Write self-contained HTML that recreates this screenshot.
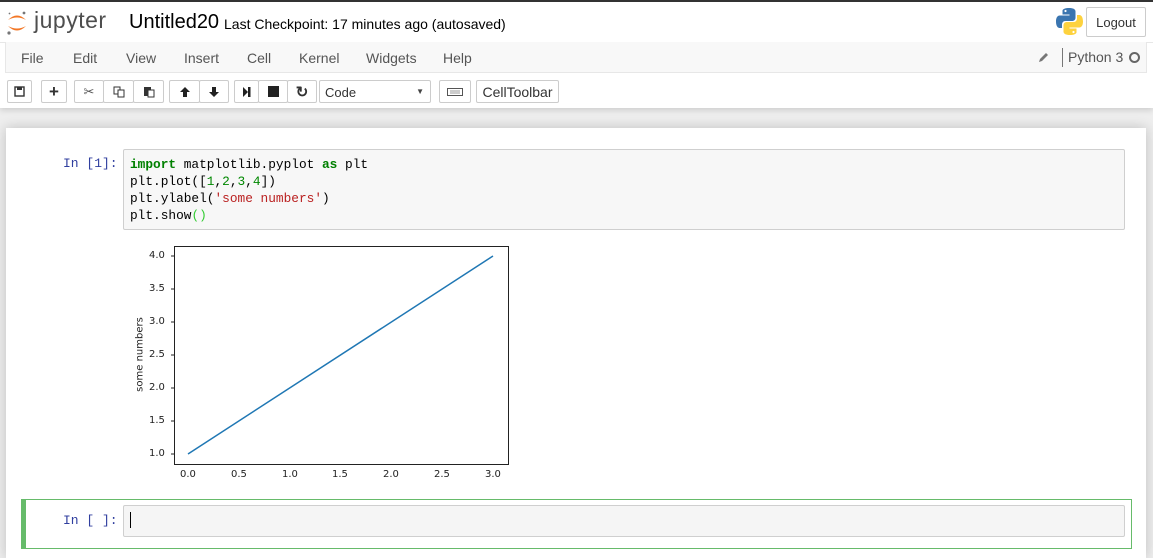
<!DOCTYPE html>
<html><head><meta charset="utf-8"><style>
*{box-sizing:border-box}
body{margin:0;width:1153px;height:555px;overflow:hidden;background:#eee;font-family:"Liberation Sans",Arial,sans-serif;position:relative}
.a{position:absolute}
.btn{position:absolute;top:80px;height:23px;border:1px solid #ccc;background:#fff;border-radius:2px;display:flex;align-items:center;justify-content:center;font-size:13px;color:#333}
.menu span{position:absolute;top:50px;font-size:14px;color:#555}
.code{font-family:"Liberation Mono","DejaVu Sans Mono",monospace;font-size:12.8px;line-height:17px;white-space:pre}
.prompt{font-family:"Liberation Mono","DejaVu Sans Mono",monospace;font-size:13px;color:#303f9f}
.tick{position:absolute;font-size:10px;color:#222;font-family:"DejaVu Sans",sans-serif}
</style></head><body>
<div class="a" style="left:0;top:0;width:1153px;height:108px;background:#fff;box-shadow:0 2px 6px rgba(0,0,0,.15)"></div>
<div class="a" style="left:0;top:0;width:1153px;height:2px;background:#333"></div>
<!-- logo -->
<svg class="a" style="left:5px;top:8px" width="24" height="28" viewBox="0 0 24 28">
<path d="M3 12 Q12 3 21 12 Q12 7 3 12Z" fill="#f37726"/>
<path d="M3 18 Q12 27 21 18 Q12 23 3 18Z" fill="#f37726"/>
<circle cx="19" cy="5" r="1.4" fill="#767677"/><circle cx="4" cy="25" r="1.6" fill="#767677"/><circle cx="4.5" cy="5.5" r="0.9" fill="#767677"/>
</svg>
<div class="a" style="left:34px;top:7px;font-size:23px;color:#4e4e4e;letter-spacing:0.5px">jupyter</div>
<div class="a" style="left:129px;top:11px;font-size:20px;color:#000">Untitled20</div>
<div class="a" style="left:224px;top:16px;font-size:14px;color:#000">Last Checkpoint: 17 minutes ago (autosaved)</div>
<!-- python logo -->
<svg class="a" style="left:1055px;top:7px" width="29" height="29" viewBox="0 0 29 29">
<path d="M14 1C7 1 7.5 4 7.5 4v3.5h7v1H5S1 8 1 14.5 4.5 21 4.5 21H7v-3.5s0-3.5 3.5-3.5h6.5s3.5 0 3.5-3.3V4.5S21 1 14 1z" fill="#3a75b0"/>
<circle cx="10.5" cy="4" r="1.1" fill="#fff"/>
<path d="M15 28c7 0 6.5-3 6.5-3v-3.5h-7v-1H24s4 .5 4-6S24.5 8 24.5 8H22v3.5s0 3.5-3.5 3.5H12s-3.5 0-3.5 3.3v6.2S8 28 15 28z" fill="#fdd23e"/>
<circle cx="18.5" cy="25" r="1.1" fill="#fff"/>
</svg>
<div class="a" style="left:1086px;top:7px;width:60px;height:30px;border:1px solid #ccc;border-radius:2px;font-size:13px;color:#333;display:flex;align-items:center;justify-content:center">Logout</div>
<div class="a" style="left:0;top:42px;width:1153px;height:1px;background:#e7e7e7"></div>
<!-- menubar -->
<div class="a" style="left:5px;top:42px;width:1142px;height:31px;background:#f8f8f8;border:1px solid #e7e7e7;border-top:none"></div>
<div class="menu"><span style="left:21px">File</span><span style="left:73px">Edit</span><span style="left:126px">View</span><span style="left:184px">Insert</span><span style="left:247px">Cell</span><span style="left:299px">Kernel</span><span style="left:366px">Widgets</span><span style="left:443px">Help</span></div>
<svg class="a" style="left:1038px;top:51px" width="12" height="12" viewBox="0 0 12 12"><path d="M1 11l1-3 6-6 2 2-6 6z" fill="#777"/></svg>
<div class="a" style="left:1062px;top:48px;width:1px;height:19px;background:#777"></div>
<div class="a" style="left:1068px;top:49px;font-size:14px;color:#555">Python 3</div>
<div class="a" style="left:1129px;top:52px;width:11px;height:11px;border:2px solid #666;border-radius:50%"></div>
<!-- toolbar -->
<div class="btn" style="left:7px;width:25px"><svg width="11" height="11" viewBox="0 0 11 11"><rect x="1" y="1" width="9" height="9" fill="none" stroke="#333" stroke-width="1.4"/><rect x="3" y="1" width="5" height="3" fill="#333"/></svg></div>
<div class="btn" style="left:41px;width:26px;font-weight:bold;font-size:17px">+</div>
<div class="btn" style="left:74px;width:30px;font-size:13px;color:#555">✂</div>
<div class="btn" style="left:103px;width:31px"><svg width="12" height="12" viewBox="0 0 12 12"><rect x="1" y="1" width="6" height="7" fill="none" stroke="#333"/><rect x="5" y="4" width="6" height="7" fill="#fff" stroke="#333"/></svg></div>
<div class="btn" style="left:133px;width:31px"><svg width="12" height="12" viewBox="0 0 12 12"><rect x="1" y="1" width="7" height="9" fill="#333"/><rect x="5" y="4" width="6" height="7" fill="#fff" stroke="#333"/></svg></div>
<div class="btn" style="left:169px;width:31px"><svg width="12" height="12" viewBox="0 0 12 12"><path d="M6 1L1 6h3v5h4V6h3z" fill="#222"/></svg></div>
<div class="btn" style="left:199px;width:30px"><svg width="12" height="12" viewBox="0 0 12 12"><path d="M6 11L1 6h3V1h4v5h3z" fill="#222"/></svg></div>
<div class="btn" style="left:234px;width:25px"><svg width="10" height="12" viewBox="0 0 10 12"><path d="M1 1l5 5-5 5z" fill="#222"/><rect x="6" y="1" width="2.5" height="10" fill="#222"/></svg></div>
<div class="btn" style="left:258px;width:30px"><div style="width:11px;height:11px;background:#222"></div></div>
<div class="btn" style="left:287px;width:30px;font-weight:bold;font-size:15px">↻</div>
<div class="btn" style="left:319px;width:112px;justify-content:space-between;padding:0 6px 0 5px;font-size:13px"><span style="margin-top:2px">Code</span><span style="font-size:8px;color:#444">▼</span></div>
<div class="btn" style="left:439px;width:32px"><svg width="16" height="10" viewBox="0 0 16 10"><rect x="0.5" y="1.5" width="15" height="7" fill="none" stroke="#555"/><path d="M3 4h10M3 6h10" stroke="#999"/></svg></div>
<div class="btn" style="left:476px;width:83px;font-size:14px">CellToolbar</div>
<!-- notebook -->
<div class="a" style="left:6px;top:128px;width:1140px;height:430px;background:#fff;box-shadow:0 0 12px rgba(0,0,0,.2)"></div>
<div class="a prompt" style="left:63px;top:156px">In [1]:</div>
<div class="a" style="left:123px;top:149px;width:1002px;height:81px;background:#f7f7f7;border:1px solid #cfcfcf;border-radius:2px"></div>
<div class="a code" style="left:130px;top:156px"><span style="color:#008000;font-weight:bold">import</span> matplotlib.pyplot <span style="color:#008000;font-weight:bold">as</span> plt
plt.plot([<span style="color:#080">1</span>,<span style="color:#080">2</span>,<span style="color:#080">3</span>,<span style="color:#080">4</span>])
plt.ylabel(<span style="color:#ba2121">'some numbers'</span>)
plt.show<span style="color:#3c3">()</span></div>
<!-- plot -->
<svg class="a" style="left:174px;top:246px" width="335" height="219"><rect x="0.5" y="0.5" width="334" height="218" fill="none" stroke="#222"/><line x1="14" y1="208" x2="319" y2="10" stroke="#1f77b4" stroke-width="1.5"/>
<g stroke="#222"><line x1="14" y1="219" x2="14" y2="222"/><line x1="65" y1="219" x2="65" y2="222"/><line x1="116" y1="219" x2="116" y2="222"/><line x1="166" y1="219" x2="166" y2="222"/><line x1="217" y1="219" x2="217" y2="222"/><line x1="268" y1="219" x2="268" y2="222"/><line x1="319" y1="219" x2="319" y2="222"/></g></svg>
<svg class="a" style="left:168px;top:246px" width="7" height="219"><g stroke="#222"><line x1="3" y1="10" x2="6" y2="10"/><line x1="3" y1="43" x2="6" y2="43"/><line x1="3" y1="76" x2="6" y2="76"/><line x1="3" y1="109" x2="6" y2="109"/><line x1="3" y1="142" x2="6" y2="142"/><line x1="3" y1="175" x2="6" y2="175"/><line x1="3" y1="208" x2="6" y2="208"/></g></svg>
<div class="tick" style="left:149px;top:250px">4.0</div><div class="tick" style="left:149px;top:283px">3.5</div><div class="tick" style="left:149px;top:316px">3.0</div><div class="tick" style="left:149px;top:349px">2.5</div><div class="tick" style="left:149px;top:382px">2.0</div><div class="tick" style="left:149px;top:415px">1.5</div><div class="tick" style="left:149px;top:448px">1.0</div>
<div class="tick" style="left:180px;top:469px">0.0</div><div class="tick" style="left:231px;top:469px">0.5</div><div class="tick" style="left:282px;top:469px">1.0</div><div class="tick" style="left:332px;top:469px">1.5</div><div class="tick" style="left:383px;top:469px">2.0</div><div class="tick" style="left:434px;top:469px">2.5</div><div class="tick" style="left:485px;top:469px">3.0</div>
<div class="tick" style="left:100px;top:349px;width:80px;text-align:center;transform:rotate(-90deg)">some numbers</div>
<!-- cell 2 -->
<div class="a" style="left:21px;top:499px;width:1111px;height:50px;border:1px solid #66bb6a;border-left:5px solid #66bb6a"></div>
<div class="a prompt" style="left:63px;top:513px">In [ ]:</div>
<div class="a" style="left:123px;top:505px;width:1002px;height:32px;background:#f5f5f5;border:1px solid #cfcfcf;border-radius:2px"></div>
<div class="a" style="left:130px;top:512px;width:1px;height:16px;background:#000"></div>
</body></html>
